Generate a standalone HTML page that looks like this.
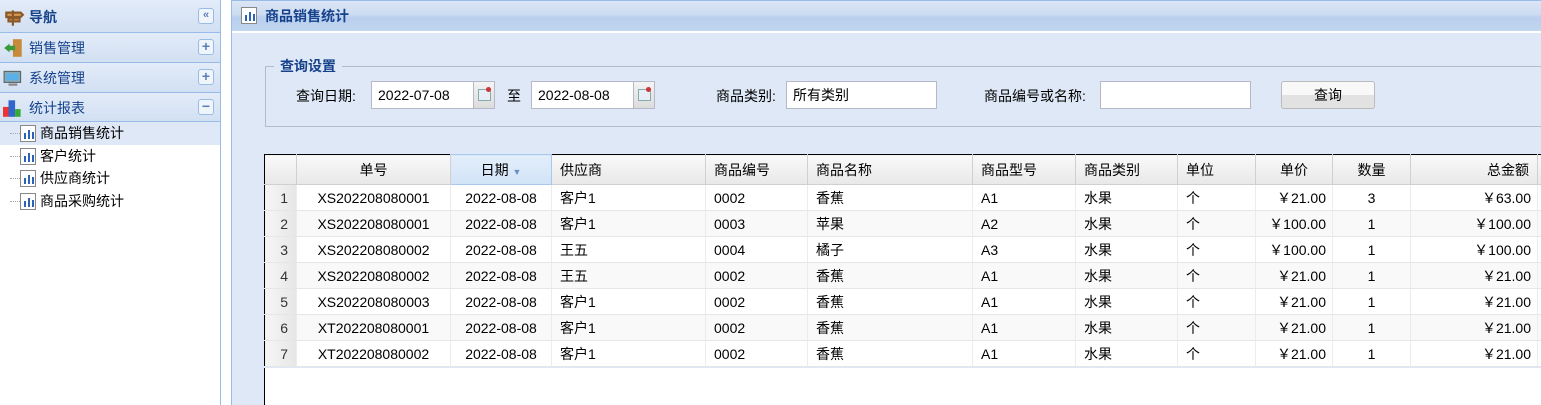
<!DOCTYPE html>
<html><head><meta charset="utf-8"><style>
*{box-sizing:border-box;margin:0;padding:0}
body{width:1541px;height:405px;overflow:hidden;background:#fff;font-family:"Liberation Sans","Noto Sans CJK SC",sans-serif;font-size:14px;color:#000;position:relative}
.nav{position:absolute;left:0;top:0;width:221px;height:405px;border-right:1px solid #99bbe8;background:#fff}
.sec{position:absolute;left:0;width:220px;height:30px;background:linear-gradient(#e3ecf8,#d2e0f3);border-bottom:1px solid #99bbe8;font-size:14px;line-height:30px;padding-left:29px;color:#15428b}
.sec .b{position:absolute;right:6px;top:6px;width:16px;height:16px;border:1px solid #99bbe8;border-radius:3px;background:#f0f5fc;color:#5a7fb8;font-size:14px;line-height:13px;text-align:center;font-weight:bold}
.ic{position:absolute;left:3px;top:5px;width:22px;height:20px}
.tree{position:absolute;left:0;width:220px;height:23px;line-height:23px;padding-left:40px;font-size:14px}
.tree .d{position:absolute;left:10px;top:11px;width:12px;border-top:1px dotted #aaa}
.ti{position:absolute;left:20px;top:3px;width:16px;height:17px;border:1px solid #888;background:#fff}
.ti i{position:absolute;bottom:2px;width:2px;background:#2b63b8}
.main{position:absolute;left:231px;top:0;width:1310px;height:405px;background:#dfe8f6;border-left:1px solid #99bbe8}
.hd{height:33px;background:linear-gradient(#dbe6f5 0%,#cddcf2 45%,#b8cfee 55%,#c2d6f0);border-bottom:2px solid #fff;border-top:1px solid #99bbe8;font-weight:bold;color:#15428b;line-height:30px;padding-left:33px;font-size:14px;position:relative}
fieldset{position:absolute;left:33px;top:56px;width:1290px;height:71px;border:1px solid #b5bcc7;border-right:none}
legend{margin-left:8px;padding:0 6px;color:#15428b;font-weight:bold;font-size:14px}
.lbl{position:absolute;top:88px;font-size:14px;line-height:16px}
.inp{position:absolute;top:81px;height:28px;border:1px solid #b5b8c8;background:#fff;padding-left:6px;line-height:26px;font-size:14px}
.cal{position:absolute;right:-1px;top:-1px;width:22px;height:28px;border:1px solid #b5b8c8;background:linear-gradient(#f4f4f4,#dcdcdc)}
.cal:after{content:"";position:absolute;left:4px;top:7px;width:11px;height:10px;border:1px solid #8aa;background:#e6eef8}
.cal:before{content:"";position:absolute;left:12px;top:5px;width:5px;height:5px;border-radius:50%;background:#c33;z-index:1}
.btn{position:absolute;left:1281px;top:81px;width:94px;height:28px;border:1px solid #bbb;border-radius:3px;background:linear-gradient(#f8f8f8 50%,#e2e2e2 50%);text-align:center;line-height:26px;font-size:14px}
table{position:absolute;left:264px;top:154px;width:1277px;border-collapse:collapse;border-top:1px solid #000;border-left:1px solid #000;font-size:14px;table-layout:fixed;background:#fff}
th{height:30px;padding:0;font-weight:normal;background:linear-gradient(#f9f9f9,#e8e8e8);border-right:1px solid #d0d0d0;border-bottom:1px solid #d0d0d0;text-align:center;color:#000}
th.l{text-align:left;text-indent:8px}
td{height:26px;border-right:1px solid #ececec;border-bottom:1px solid #e6e6e6;padding:0;text-indent:8px;white-space:nowrap;overflow:hidden;background:#fff}
tr:nth-child(odd) td{background:#f9f9f9}
td.n{background:linear-gradient(90deg,#f6f6f6,#e6e6e6)!important;text-align:right;padding-right:8px;color:#333}
.c{text-align:center;text-indent:0}.r{text-align:right;text-indent:0;padding-right:6px}
.sort{background:linear-gradient(#e3eefa,#d1e3f7)!important;border:1px solid #a9c8ef}
.blank{position:absolute;left:264px;top:368px;width:1277px;height:37px;background:#fff;border-left:1px solid #000}
</style></head><body>
<div class="nav">
 <div class="sec" style="top:0;height:33px;line-height:35px;font-weight:bold"><svg class="ic" style="top:7px" viewBox="0 0 20 16"><path d="M9 2v14M3 4h13l2 2-2 2H3zM5 9h10v3H5z" stroke="#8a5a2a" stroke-width="2" fill="#d89a52"/></svg>导航<span class="b" style="top:8px;font-size:11px">«</span></div>
 <div class="sec" style="top:33px"><svg class="ic" viewBox="0 0 20 16"><rect x="9" y="0" width="8" height="16" fill="#c8893a"/><path d="M1 8l5-4v2h5v4H6v2z" fill="#3a9a3a"/></svg>销售管理<span class="b">+</span></div>
 <div class="sec" style="top:63px"><svg class="ic" viewBox="0 0 20 16"><rect x="1" y="2" width="15" height="10" fill="#8ab" stroke="#566"/><rect x="3" y="4" width="11" height="6" fill="#5ab0e8"/><rect x="5" y="13" width="8" height="2" fill="#888"/></svg>系统管理<span class="b">+</span></div>
 <div class="sec" style="top:93px;height:29px"><svg class="ic" viewBox="0 0 20 16"><rect x="0" y="7" width="5" height="9" fill="#e33"/><rect x="5" y="1" width="6" height="15" fill="#36c"/><rect x="11" y="9" width="5" height="7" fill="#3a3"/></svg>统计报表<span class="b">−</span></div>
 <div class="tree" style="top:122px;background:#dfe8f6"><span class="d"></span><span class="ti"><i style="left:3px;height:6px"></i><i style="left:7px;height:9px"></i><i style="left:11px;height:7px"></i></span>商品销售统计</div>
 <div class="tree" style="top:145px"><span class="d"></span><span class="ti"><i style="left:3px;height:6px"></i><i style="left:7px;height:9px"></i><i style="left:11px;height:7px"></i></span>客户统计</div>
 <div class="tree" style="top:167px"><span class="d"></span><span class="ti"><i style="left:3px;height:6px"></i><i style="left:7px;height:9px"></i><i style="left:11px;height:7px"></i></span>供应商统计</div>
 <div class="tree" style="top:190px"><span class="d"></span><span class="ti"><i style="left:3px;height:6px"></i><i style="left:7px;height:9px"></i><i style="left:11px;height:7px"></i></span>商品采购统计</div>
</div>
<div class="main">
 <div class="hd"><span class="ti" style="left:9px;top:6px"><i style="left:3px;height:6px"></i><i style="left:7px;height:9px"></i><i style="left:11px;height:7px"></i></span>商品销售统计</div>
 <fieldset><legend>查询设置</legend></fieldset>
</div>
<span class="lbl" style="left:296px">查询日期:</span>
<div class="inp" style="left:371px;width:124px">2022-07-08<span class="cal"></span></div>
<span class="lbl" style="left:507px">至</span>
<div class="inp" style="left:531px;width:124px">2022-08-08<span class="cal"></span></div>
<span class="lbl" style="left:716px">商品类别:</span>
<div class="inp" style="left:786px;width:151px">所有类别</div>
<span class="lbl" style="left:984px">商品编号或名称:</span>
<div class="inp" style="left:1100px;width:151px"></div>
<div class="btn">查询</div>
<div class="blank"></div>
<table>
<colgroup><col style="width:32px"><col style="width:154px"><col style="width:101px"><col style="width:154px"><col style="width:102px"><col style="width:165px"><col style="width:103px"><col style="width:102px"><col style="width:78px"><col style="width:77px"><col style="width:78px"><col style="width:127px"><col style="width:4px"></colgroup>
<tr><th></th><th>单号</th><th class="sort">日期 <span style="color:#6a8fc8;font-size:9px">▼</span></th><th class="l">供应商</th><th class="l">商品编号</th><th class="l">商品名称</th><th class="l">商品型号</th><th class="l">商品类别</th><th class="l">单位</th><th>单价</th><th>数量</th><th style="text-align:right;padding-right:8px">总金额</th><th></th></tr>
<tr><td class="n">1</td><td class="c">XS202208080001</td><td class="c">2022-08-08</td><td>客户1</td><td>0002</td><td>香蕉</td><td>A1</td><td>水果</td><td>个</td><td class="r">￥21.00</td><td class="c">3</td><td class="r">￥63.00</td><td></td></tr>
<tr><td class="n">2</td><td class="c">XS202208080001</td><td class="c">2022-08-08</td><td>客户1</td><td>0003</td><td>苹果</td><td>A2</td><td>水果</td><td>个</td><td class="r">￥100.00</td><td class="c">1</td><td class="r">￥100.00</td><td></td></tr>
<tr><td class="n">3</td><td class="c">XS202208080002</td><td class="c">2022-08-08</td><td>王五</td><td>0004</td><td>橘子</td><td>A3</td><td>水果</td><td>个</td><td class="r">￥100.00</td><td class="c">1</td><td class="r">￥100.00</td><td></td></tr>
<tr><td class="n">4</td><td class="c">XS202208080002</td><td class="c">2022-08-08</td><td>王五</td><td>0002</td><td>香蕉</td><td>A1</td><td>水果</td><td>个</td><td class="r">￥21.00</td><td class="c">1</td><td class="r">￥21.00</td><td></td></tr>
<tr><td class="n">5</td><td class="c">XS202208080003</td><td class="c">2022-08-08</td><td>客户1</td><td>0002</td><td>香蕉</td><td>A1</td><td>水果</td><td>个</td><td class="r">￥21.00</td><td class="c">1</td><td class="r">￥21.00</td><td></td></tr>
<tr><td class="n">6</td><td class="c">XT202208080001</td><td class="c">2022-08-08</td><td>客户1</td><td>0002</td><td>香蕉</td><td>A1</td><td>水果</td><td>个</td><td class="r">￥21.00</td><td class="c">1</td><td class="r">￥21.00</td><td></td></tr>
<tr><td class="n">7</td><td class="c">XT202208080002</td><td class="c">2022-08-08</td><td>客户1</td><td>0002</td><td>香蕉</td><td>A1</td><td>水果</td><td>个</td><td class="r">￥21.00</td><td class="c">1</td><td class="r">￥21.00</td><td></td></tr>
</table>
</body></html>
